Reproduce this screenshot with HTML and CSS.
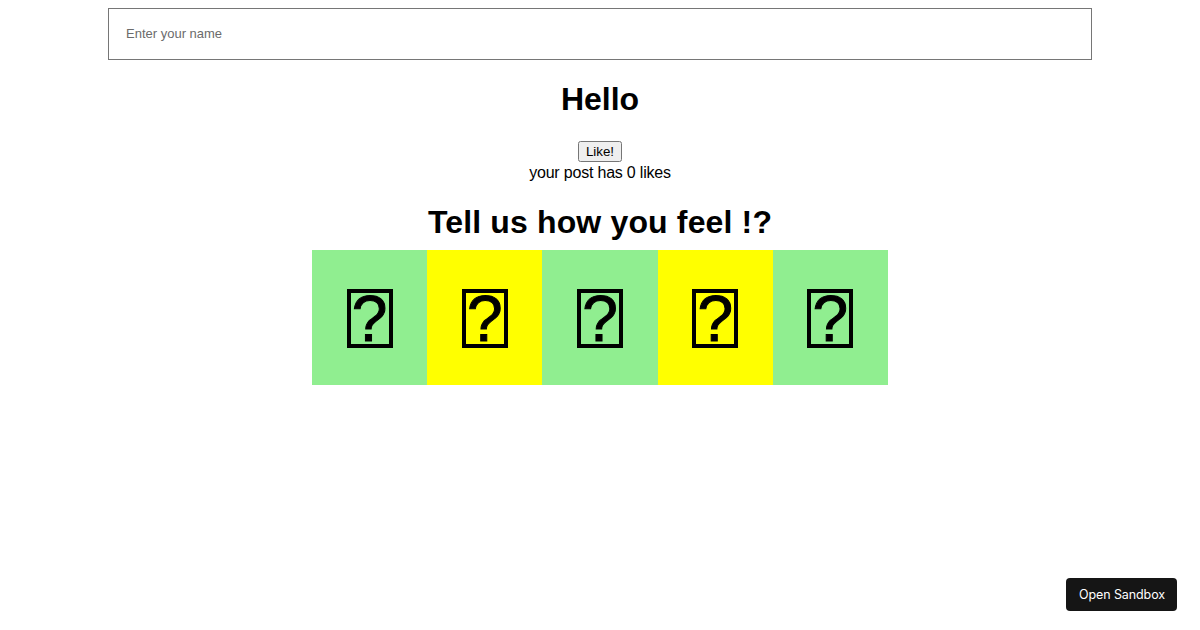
FILE: index.html
```
<!doctype html>
<html lang="en">
    <head>
        <meta charset="UTF-8" />
        <meta name="viewport" content="width=device-width, initial-scale=1.0" />
        <title>Hello</title>
        <link rel="stylesheet" href="styles.css">
    </head>
    <body>
        <div class="app">
            <input class="name-input" type="text" placeholder="Enter your name" />
            <h1 class="hello">Hello</h1>
            <div class="likes">
                <button class="like-btn">Like!</button>
                <div class="like-count">your post has 0 likes</div>
            </div>
            <h1 class="feel-title">Tell us how you feel !?</h1>
            <div class="moods">
                <div class="mood green"><span class="tofu">?</span></div>
                <div class="mood yellow"><span class="tofu">?</span></div>
                <div class="mood green"><span class="tofu">?</span></div>
                <div class="mood yellow"><span class="tofu">?</span></div>
                <div class="mood green"><span class="tofu">?</span></div>
            </div>
        </div>
        <a class="sandbox-btn">Open Sandbox</a>
    </body>
</html>
```
FILE: styles.css
```
body {
    font-family: "Liberation Sans", Arial, sans-serif;
    margin: 8px;
    background-color: #fff;
}

.app {
    text-align: center;
}

.name-input {
    display: block;
    box-sizing: border-box;
    width: calc(100% - 200px);
    height: 52px;
    margin: 0 auto;
    padding: 0 17px 1px;
    border: 1px solid #767676;
    font-family: "Liberation Sans", Arial, sans-serif;
    font-size: 13px;
}

.name-input::placeholder {
    color: #6b6b6b;
}

h1 {
    font-size: 32px;
    margin: 21px 0;
}

.hello {
    margin-bottom: 23px;
}

.like-btn {
    font-family: "Liberation Sans", Arial, sans-serif;
    font-size: 13.33px;
}

.likes {
    font-size: 16px;
}

.like-count {
    margin-top: 2px;
    letter-spacing: -0.2px;
}

.feel-title {
    margin-top: 22px;
    margin-bottom: 9px;
    letter-spacing: 0.15px;
}

.moods {
    display: grid;
    grid-template-columns: repeat(5, 1fr);
    width: 576px;
    margin: 0 auto;
}

.mood {
    display: flex;
    align-items: center;
    justify-content: center;
    height: 135px;
}

.tofu {
    display: flex;
    align-items: center;
    justify-content: center;
    box-sizing: border-box;
    width: 46px;
    height: 59px;
    margin-top: 2px;
    border: 4px solid #000;
    font-size: 64px;
    line-height: 1;
    color: #000;
    -webkit-text-stroke: 1px #000;
}

.green {
    background-color: lightgreen;
}

.yellow {
    background-color: yellow;
}

.sandbox-btn {
    position: fixed;
    right: 23px;
    bottom: 19px;
    padding: 0 12px 0 13px;
    height: 33px;
    line-height: 33px;
    background-color: #151515;
    color: #fff;
    border-radius: 4px;
    font-family: Inter, sans-serif;
    font-size: 12.5px;
    letter-spacing: -0.1px;
}
```
